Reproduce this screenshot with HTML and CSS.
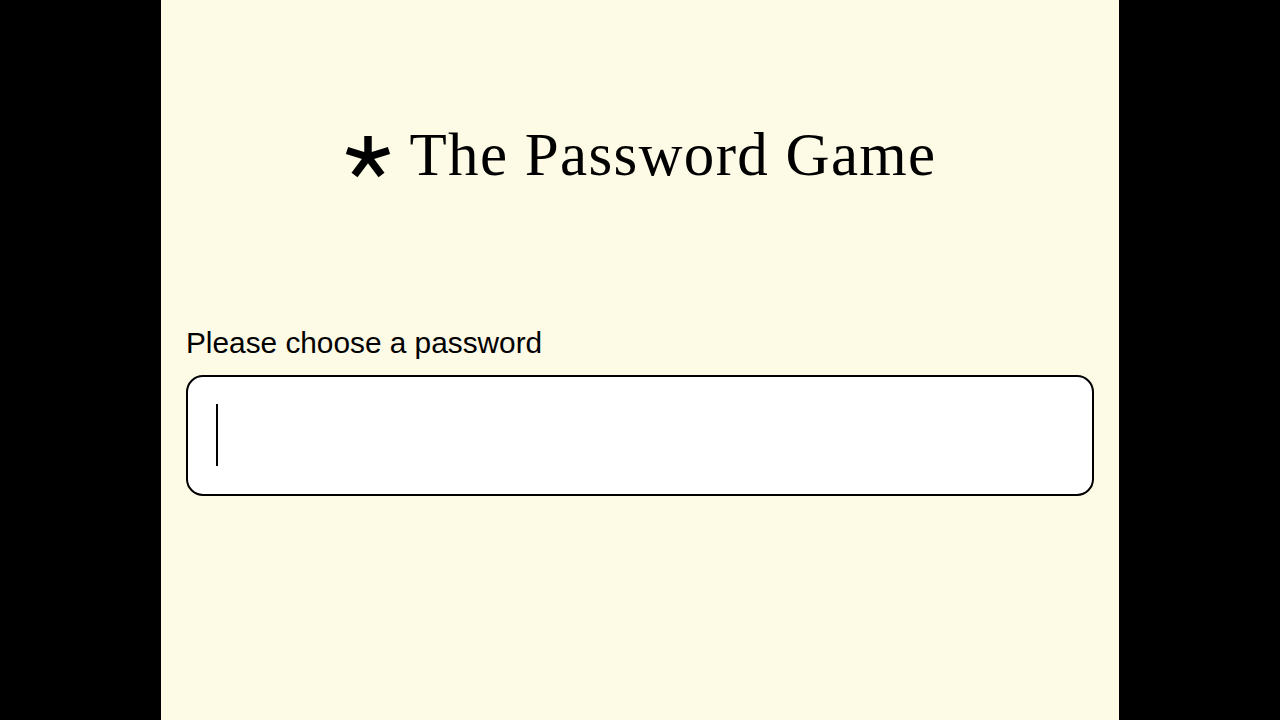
FILE: index.html
```html
<!DOCTYPE html>
<html lang="en">
<head>
<meta charset="utf-8">
<title>The Password Game</title>
<link rel="stylesheet" href="styles.css">
</head>
<body>
<main class="page">
  <h1 class="title">
    <svg class="star" viewBox="0 0 48 48" width="48" height="48" aria-hidden="true">
      <g stroke="#000" stroke-width="7.5" stroke-linecap="butt" fill="none">
        <line x1="24" y1="24" x2="24" y2="3"/>
        <line x1="24" y1="24" x2="45" y2="17.5"/>
        <line x1="24" y1="24" x2="37.5" y2="42"/>
        <line x1="24" y1="24" x2="10.5" y2="42"/>
        <line x1="24" y1="24" x2="3" y2="17.5"/>
      </g>
    </svg>
    <span class="title-text">The Password Game</span>
  </h1>
  <label class="label" for="pw">Please choose a password</label>
  <div class="box">
    <span class="caret"></span>
  </div>
</main>
</body>
</html>
```
FILE: styles.css
```css
html, body {
  margin: 0;
  padding: 0;
  background: #000;
  height: 100%;
}
.page {
  width: 958px;
  height: 720px;
  margin-left: 161px;
  background: #fdfae6;
  box-sizing: border-box;
  padding: 0 25px;
  display: flex;
  flex-direction: column;
}
.title {
  margin: 120px 0 0 0;
  display: flex;
  align-items: center;
  justify-content: center;
  gap: 18px;
  font-family: "Liberation Serif", "Times New Roman", serif;
  font-weight: normal;
  font-size: 61px;
  letter-spacing: 1.3px;
  line-height: 70px;
  color: #000;
  padding-left: 0;
}
.star {
  display: block;
  margin-top: 4px;
}
.label {
  margin-top: 136px;
  font-family: "Liberation Sans", Arial, sans-serif;
  font-size: 29.8px;
  line-height: 34px;
  color: #000;
}
.box {
  margin-top: 15px;
  height: 121px;
  box-sizing: border-box;
  border: 2px solid #000;
  border-radius: 17px;
  background: #fff;
  padding: 27px 0 0 28px;
}
.caret {
  display: block;
  width: 2px;
  height: 62px;
  background: #000;
}
```
